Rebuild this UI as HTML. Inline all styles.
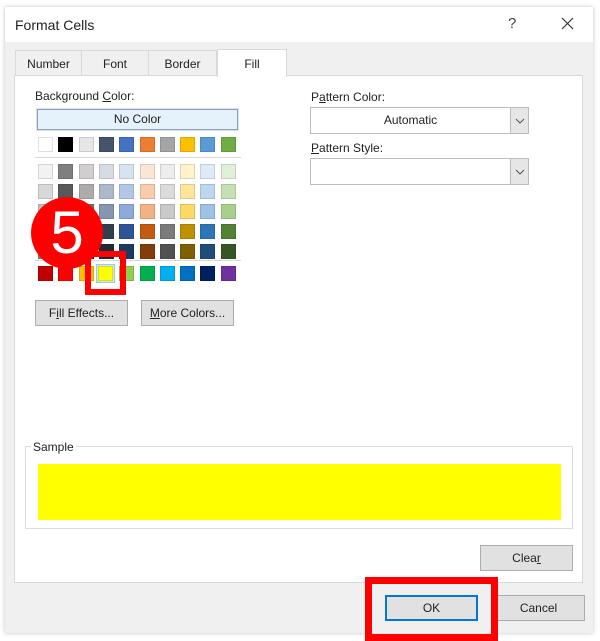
<!DOCTYPE html>
<html><head><meta charset="utf-8"><style>
*{margin:0;padding:0;box-sizing:border-box}
body{width:600px;height:641px;background:#fff;position:relative;overflow:hidden;font-family:"Liberation Sans",sans-serif;font-size:12px;color:#222}
.a{position:absolute}
.sw{position:absolute;width:15px;height:15px;border:1px solid rgba(0,0,0,0.12)}
.btn{position:absolute;background:#e1e1e1;border:1px solid #adadad;text-align:center;line-height:24px;font-size:12px;color:#222}
.dd{position:absolute;background:#fff;border:1px solid #bcbcbc}
.dd .ar{position:absolute;right:0;top:0;width:18px;height:100%;background:#e6e6e6;border-left:1px solid #bcbcbc}
</style></head><body>
<div class="a" style="left:5px;top:7px;width:588px;height:626px;background:#f0f0f0;box-shadow:0 0 4px rgba(0,0,0,0.25)"></div>
<div class="a" style="left:5px;top:7px;width:588px;height:35px;background:#fff"></div>
<div class="a" style="left:15px;top:17px;font-size:14px;color:#222">Format Cells</div>
<div class="a" style="left:508px;top:15px;font-size:15px;color:#444">?</div>
<svg class="a" style="left:561px;top:17px" width="13" height="13"><path d="M1 1L12 12M12 1L1 12" stroke="#333" stroke-width="1.2"/></svg>
<!-- tabs -->
<div class="a" style="left:15px;top:50px;width:67px;height:25px;border:1px solid #d9d9d9;border-bottom:none;background:#f0f0f0;text-align:center;line-height:26px">Number</div>
<div class="a" style="left:82px;top:50px;width:67px;height:25px;border:1px solid #d9d9d9;border-bottom:none;border-left:none;background:#f0f0f0;text-align:center;line-height:26px">Font</div>
<div class="a" style="left:149px;top:50px;width:68px;height:25px;border:1px solid #d9d9d9;border-bottom:none;border-left:none;background:#f0f0f0;text-align:center;line-height:26px">Border</div>
<div class="a" style="left:14px;top:75px;width:569px;height:508px;background:#fff;border:1px solid #d9d9d9"></div>
<div class="a" style="left:217px;top:49px;width:70px;height:28px;background:#fff;border:1px solid #d9d9d9;border-bottom:none;text-align:center;line-height:28px">Fill</div>
<div class="a" style="left:35px;top:89px">Background <u>C</u>olor:</div>
<div class="a" style="left:36px;top:108px;width:203px;height:23px;background:#cce8ff;padding:1px"><div style="width:100%;height:100%;background:#e5f1fb;border:1px solid #99a;text-align:center;line-height:19px;font-size:12px">No Color</div></div>
<div class="a" style="left:35px;top:157px;width:206px;height:1px;background:#d8d8d8"></div>
<div class="a" style="left:35px;top:260px;width:206px;height:1px;background:#d8d8d8"></div>
<div id="g"></div>
<div class="a" style="left:96px;top:264px;width:19px;height:19px;background:#cce8ff;border:1px solid #99c9ef"></div>
<div class="sw" style="left:98px;top:266px;background:#ff0"></div>
<div class="a" style="left:31px;top:197px;width:72px;height:72px;border-radius:50%;background:#f00;color:#fff;font-size:60px;text-align:center;line-height:72px;font-family:'Liberation Sans',sans-serif">5</div>
<div class="a" style="left:85px;top:251px;width:41px;height:44px;border:6px solid #f00"></div>
<div class="btn" style="left:35px;top:300px;width:93px;height:26px">F<u>i</u>ll Effects...</div>
<div class="btn" style="left:141px;top:300px;width:93px;height:26px"><u>M</u>ore Colors...</div>
<div class="a" style="left:311px;top:90px">P<u>a</u>ttern Color:</div>
<div class="dd" style="left:310px;top:107px;width:219px;height:27px"><div style="position:absolute;left:0;right:18px;text-align:center;line-height:25px">Automatic</div><div class="ar"><svg width="18" height="25"><path d="M5 11l4 4 4-4" stroke="#555" fill="none"/></svg></div></div>
<div class="a" style="left:311px;top:141px"><u>P</u>attern Style:</div>
<div class="dd" style="left:310px;top:158px;width:219px;height:27px"><div class="ar"><svg width="18" height="25"><path d="M5 11l4 4 4-4" stroke="#555" fill="none"/></svg></div></div>
<div class="a" style="left:25px;top:446px;width:548px;height:83px;border:1px solid #dcdcdc"></div>
<div class="a" style="left:31px;top:440px;background:#fff;padding:0 2px">Sample</div>
<div class="a" style="left:38px;top:464px;width:523px;height:56px;background:#ff0"></div>
<div class="btn" style="left:480px;top:545px;width:93px;height:26px">Clea<u>r</u></div>
<div class="btn" style="left:385px;top:595px;width:93px;height:26px;border:1px solid #0078d7;box-shadow:inset 0 0 0 1px #0078d7">OK</div>
<div class="btn" style="left:492px;top:595px;width:93px;height:26px">Cancel</div>
<div class="a" style="left:365px;top:577px;width:133px;height:64px;border:7px solid #f00"></div>
<script>
var rows=[
["fff","000","e7e6e6","44546a","4472c4","ed7d31","a5a5a5","ffc000","5b9bd5","70ad47"],
["f2f2f2","7f7f7f","d0cece","d6dce4","d9e2f3","fbe5d5","ededed","fff2cc","deebf6","e2efd9"],
["d8d8d8","595959","aeabab","adb9ca","b4c6e7","f7cbac","dbdbdb","fee599","bdd7ee","c5e0b3"],
["bfbfbf","3f3f3f","757070","8496b0","8eaadb","f4b183","c9c9c9","ffd965","9cc3e5","a8d08d"],
["a5a5a5","262626","3a3838","323f4f","2f5496","c55a11","7b7b7b","bf9000","2e75b5","538135"],
["7f7f7f","0c0c0c","171616","222a35","1f3864","833c0b","525252","7f6000","1e4e79","375623"],
["c00000","ff0000","ffc000","ffff00","92d050","00b050","00b0f0","0070c0","002060","7030a0"]];
var ys=[137,164,184,204,224,244,266],h="";
rows.forEach(function(r,j){r.forEach(function(c,i){h+='<div class="sw" style="left:'+Math.round(38+i*20.3)+'px;top:'+ys[j]+'px;background:#'+c+'"></div>';});});
document.getElementById('g').innerHTML=h;
</script>
</body></html>
